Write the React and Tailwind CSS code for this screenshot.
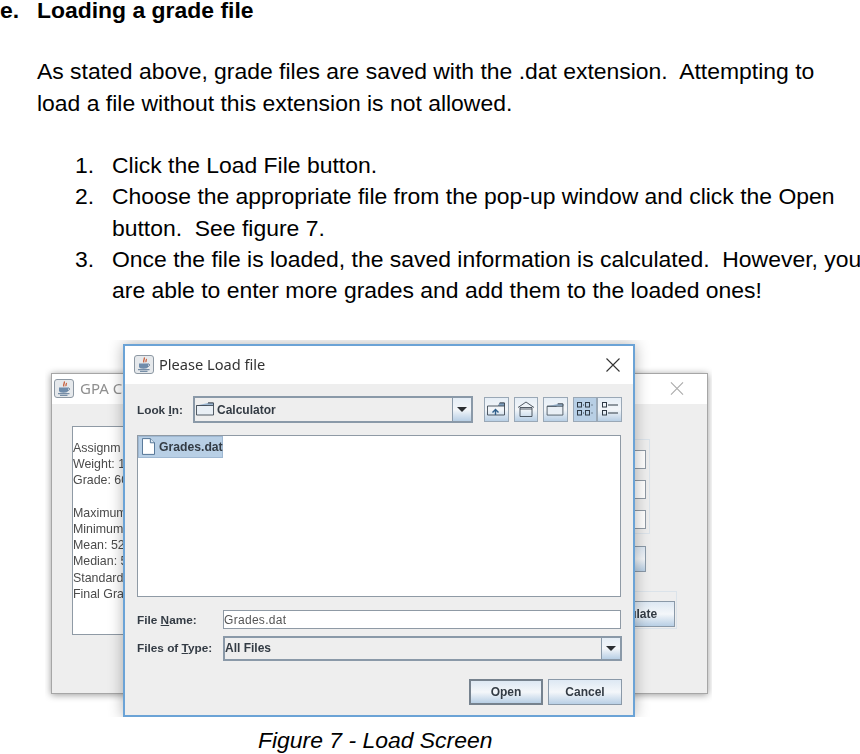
const JavaIcon = ({ className }) => (
  <svg viewBox="0 0 20 19" className={className}>
    <rect x="0.5" y="0.5" width="19" height="18" rx="2.5" fill="#e6e9ec" stroke="#8d98a3" />
    <path d="M10 2.5c1.6 1.6-1.6 2.6 0 5M12.2 4c.8 1-1 1.8 0 3.2" fill="none" stroke="#c8603d" strokeWidth="1.3" />
    <path d="M5 8.5h9v3c0 1.6-1.6 2.2-4.5 2.2S5 13.1 5 11.5z" fill="#6f8cab" />
    <path d="M14 9c2.2-.5 2.2 2.4-.4 2.5M4 14.7h11.5M6 16.3h7.5" fill="none" stroke="#5c7896" strokeWidth="1" />
  </svg>
);

const CloseIcon = ({ className }) => (
  <svg viewBox="0 0 14 14" className={className} fill="none" stroke="currentColor" strokeWidth="1.1">
    <path d="M.5.5l13 13M13.5.5l-13 13" />
  </svg>
);

const FolderIcon = ({ className }) => (
  <svg viewBox="0 0 18 14" className={className}>
    <path d="M.5 3.5h10l1.5-2.5h5.5v12H.5z" fill="#e9eff5" stroke="#3f4a55" strokeWidth="0.9" />
    <path d="M12 1h5.5v2.5H.5" fill="#9db7d1" stroke="#3f4a55" strokeWidth="0.9" />
  </svg>
);

const FileIcon = ({ className }) => (
  <svg viewBox="0 0 14 18" className={className}>
    <path d="M.5.5h8.5l4.5 4.5v12.5H.5z" fill="#fff" stroke="#4a6c8f" />
    <path d="M9 .5v4.5h4.5" fill="#dbe6f1" stroke="#4a6c8f" />
  </svg>
);

const UpIcon = ({ className }) => (
  <svg viewBox="0 0 18 14" className={className} fill="none" stroke="#3f4a55" strokeWidth="0.9">
    <path d="M.5 4h11l1.5-3h4.5v12H.5z" />
    <path d="M12.5 1h5v3h-6" fill="#7f9fbf" />
    <path d="M8.5 13V8M5.5 10.5l3-3 3 3" stroke="#2f5e8a" strokeWidth="1.4" />
  </svg>
);

const HomeIcon = ({ className }) => (
  <svg viewBox="0 0 18 16" className={className} fill="none" stroke="#3f4a55" strokeWidth="0.9">
    <path d="M1 6.5L9 1l8 5.5" />
    <path d="M3 6.5h12v9H3z" />
    <path d="M3 8h12" />
  </svg>
);

const GridIcon = ({ className }) => (
  <svg viewBox="0 0 18 16" className={className} fill="none" stroke="#2f3a45" strokeWidth="1">
    <rect x="1.5" y="1.5" width="4" height="4.5" />
    <rect x="9.5" y="1.5" width="4" height="4.5" />
    <rect x="1.5" y="9.5" width="4" height="4.5" />
    <rect x="9.5" y="9.5" width="4" height="4.5" />
    <path d="M7 4h1M15.5 4h1M7 12h1M15.5 12h1" />
  </svg>
);

const ListIcon = ({ className }) => (
  <svg viewBox="0 0 18 16" className={className} fill="none" stroke="#2f3a45" strokeWidth="1">
    <rect x="1.5" y="1.5" width="4" height="4.5" />
    <rect x="1.5" y="9.5" width="4" height="4.5" />
    <path d="M7 4h10M7 12h10" />
  </svg>
);

const ArrowButton = ({ className }) => (
  <div className={`flex items-center justify-center border-l border-[#8a99a8] bg-linear-to-b from-[#e6eef6] via-[#f3f6f9] to-[#b8cfe5] ${className}`}>
    <div className="h-0 w-0 border-x-[5px] border-t-[5px] border-x-transparent border-t-[#2b2f33]" />
  </div>
);

const ToolButton = ({ children, active }) => (
  <div className={`flex h-[25px] w-[24.6px] items-center justify-center border border-[#9aa8b6] ${active ? "bg-[#b8cfe5]" : "bg-linear-to-b from-[#e6eef6] via-[#f3f6f9] to-[#b8cfe5]"}`}>
    {children}
  </div>
);

const PushButton = ({ children, strong }) => (
  <div className={`flex h-[26px] w-[74px] items-center justify-center bg-linear-to-b from-[#dde8f3] via-[#f4f7fa] to-[#b8cfe5] pt-[1px] text-[12px] font-bold text-[#333b44] ${strong ? "border-2 border-[#76828e]" : "border border-[#8a99a8]"}`}>
    {children}
  </div>
);

const gpaLines = ["Assignm", "Weight: 1", "Grade: 60", "\u00a0", "Maximum", "Minimum", "Mean: 52", "Median: 5", "Standard", "Final Gra"];

const Field = () => <div className="h-[19px] w-[40px] shrink-0 border border-[#8f9aa5] bg-white" />;

function BackWindow() {
  return (
    <div className="absolute left-[6px] top-[33px] flex h-[321px] w-[657px] flex-col border border-[#a6a6a6] bg-[#eeeeee] shadow-[0_1px_7px_rgba(0,0,0,0.4)]">
      <div className="flex h-[30px] items-center justify-between bg-white pl-[2px] pr-[23px]">
        <div className="flex items-center gap-[6px]">
          <JavaIcon className="h-[19px] w-[20px]" />
          <span className="font-['Noto_Sans'] text-[15px] text-[#8f8f8f]">GPA Calculator</span>
        </div>
        <CloseIcon className="h-[13px] w-[14px] text-[#a8a8a8]" />
      </div>
      <div className="flex flex-1 items-start justify-between pb-[58px] pl-[20px] pr-[30px] pt-[22px]">
        <div className="h-[209px] w-[300px] border border-[#8f9aa5] bg-white pt-[13px] font-['Liberation_Sans'] text-[12.4px] leading-[16.2px] text-[#4b4b4b]">
          {gpaLines.map((l, i) => <div key={i}>{l}</div>)}
        </div>
        <div className="flex flex-col items-end">
          <div className="mr-[27px] mt-[13px] flex h-[95px] flex-col gap-[11px] border border-[#dbe3ea] pb-[2px] pl-[10px] pr-[3px] pt-[10px]">
            <Field />
            <Field />
            <Field />
          </div>
          <div className="mr-[31px] mt-[12px] h-[26px] w-[60px] border border-[#8a99a8] bg-linear-to-b from-[#dde8f3] via-[#f4f7fa] to-[#b8cfe5]" />
          <div className="mt-[19px] h-[38px] border border-[#dbe3ea] px-[1px] pb-[1px] pt-[9px]">
            <div className="flex h-[26px] w-[89px] items-center justify-center border border-[#8a99a8] bg-linear-to-b from-[#dde8f3] via-[#f4f7fa] to-[#b8cfe5] pt-[1px] font-['Liberation_Sans'] text-[12px] font-bold text-[#333b44]">
              Calculate
            </div>
          </div>
        </div>
      </div>
    </div>
  );
}

function Dialog() {
  return (
    <div className="absolute left-[78px] top-[4px] flex h-[373px] w-[512px] flex-col border-2 border-[#6ba3d6] bg-[#eeeeee] font-['Liberation_Sans'] shadow-[0_0_14px_rgba(0,0,0,0.3)]">
      <div className="flex h-[38px] shrink-0 items-center justify-between bg-white pl-[9px] pr-[13px]">
        <div className="flex items-center gap-[5px]">
          <JavaIcon className="h-[19px] w-[20px]" />
          <span className="font-['Noto_Sans'] text-[14.6px] text-[#333]">Please Load file</span>
        </div>
        <CloseIcon className="h-[14px] w-[14px] text-[#333]" />
      </div>
      <div className="flex flex-1 flex-col px-[12px] pt-[12px] text-[12px] font-bold text-[#333b44]">
        <div className="-mr-[1px] flex h-[27px] items-center">
          <span className="w-[56px] shrink-0 pt-[2px] text-[11.8px]">Look <u>I</u>n:</span>
          <div className="flex h-[27px] w-[280px] shrink-0 items-center border-2 border-[#8a99a8]">
            <FolderIcon className="ml-[1px] h-[14px] w-[18px]" />
            <span className="ml-[3px] flex-1 pt-[2px]">Calculator</span>
            <ArrowButton className="h-full w-[19px]" />
          </div>
          <div className="ml-[11px] flex shrink-0 gap-[5px]">
            <ToolButton><UpIcon className="h-[14px] w-[18px]" /></ToolButton>
            <ToolButton><HomeIcon className="h-[16px] w-[18px]" /></ToolButton>
            <ToolButton><FolderIcon className="h-[13px] w-[18px]" /></ToolButton>
            <div className="flex">
              <ToolButton active><GridIcon className="h-[16px] w-[18px]" /></ToolButton>
              <ToolButton><ListIcon className="h-[16px] w-[18px]" /></ToolButton>
            </div>
          </div>
        </div>
        <div className="mt-[12px] h-[162px] border border-[#8f9aa5] bg-white">
          <div className="flex h-[22px] w-[85px] items-center gap-[4px] border border-[#9fb8d2] bg-[#b8cfe5] pl-[3px]">
            <FileIcon className="h-[17px] w-[13px] shrink-0" />
            <span className="pt-[2px] text-[12.2px]">Grades.dat</span>
          </div>
        </div>
        <div className="mt-[13px] flex h-[19px] items-center">
          <span className="w-[86px] pt-[2px] text-[11.8px]">File <u>N</u>ame:</span>
          <div className="flex h-full flex-1 items-center border border-[#8f9aa5] bg-white pt-[2px] text-[12px] font-normal tracking-[0.3px] text-[#555]">
            Grades.dat
          </div>
        </div>
        <div className="-mr-[1px] mt-[7px] flex h-[25px] items-center">
          <span className="w-[86px] pt-[1px] text-[11.8px]">Files of <u>T</u>ype:</span>
          <div className="flex h-full flex-1 items-center border-2 border-[#8a99a8]">
            <span className="flex-1 pt-[1px]">All Files</span>
            <ArrowButton className="h-full w-[19px]" />
          </div>
        </div>
        <div className="-mr-[1px] mt-[18px] flex justify-end gap-[5px]">
          <PushButton strong>Open</PushButton>
          <PushButton>Cancel</PushButton>
        </div>
      </div>
    </div>
  );
}

export default function App() {
  const line = "block whitespace-pre";
  return (
    <div className="h-[754px] w-[860px] overflow-hidden bg-white font-['Liberation_Sans',sans-serif] text-[22.93px] leading-[31.25px] text-black">
      <div className="flex font-bold leading-[20px]">
        <span className="w-[37px]">e.</span>
        <span>Loading a grade file</span>
      </div>
      <div className="mt-[36.4px] pl-[37px]">
        <span className={line}>As stated above, grade files are saved with the .dat extension.  Attempting to</span>
        <span className={line}>load a file without this extension is not allowed.</span>
      </div>
      <ol className="mt-[31.25px] pl-[75px]">
        <li className="flex">
          <span className="w-[37px] shrink-0">1.</span>
          <span className={line}>Click the Load File button.</span>
        </li>
        <li className="flex">
          <span className="w-[37px] shrink-0">2.</span>
          <div>
            <span className={line}>Choose the appropriate file from the pop-up window and click the Open</span>
            <span className={line}>button.  See figure 7.</span>
          </div>
        </li>
        <li className="flex">
          <span className="w-[37px] shrink-0">3.</span>
          <div>
            <span className={line}>Once the file is loaded, the saved information is calculated.  However, you</span>
            <span className={line}>are able to enter more grades and add them to the loaded ones!</span>
          </div>
        </li>
      </ol>
      <div className="relative ml-[45px] mt-[33.6px] h-[377px] w-[667px] overflow-hidden blur-[0.3px]">
        <BackWindow />
        <Dialog />
      </div>
      <div className="mt-[8px] pl-[258px] italic">Figure 7 - Load Screen</div>
    </div>
  );
}
